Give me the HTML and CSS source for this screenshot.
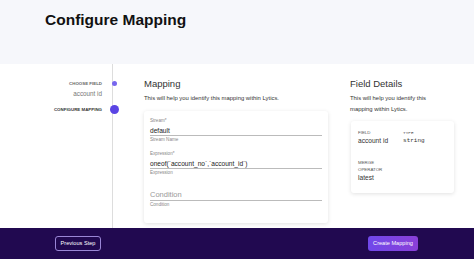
FILE: index.html
```html
<!DOCTYPE html>
<html lang="en">

<head>
    <meta charset="UTF-8">
    <meta name="viewport" content="width=device-width, initial-scale=1.0">
    <title>Configure Mapping</title>

    <link rel="stylesheet" href="styles.css">
</head>

<body>
    <div class="page-head">
        <h1>Configure Mapping</h1>
    </div>

    <div class="page-body">
        <div class="steps">
            <div class="step">
                <span class="step-title">Choose Field</span>
                <span class="step-value">account id</span>
                <span class="dot dot-small"></span>
            </div>
            <div class="step step-active">
                <span class="step-title">Configure Mapping</span>
                <span class="dot dot-big"></span>
            </div>
        </div>

        <div class="mapping">
            <h2>Mapping</h2>
            <p class="desc">This will help you identify this mapping within Lytics.</p>
            <div class="card form-card">
                <div class="field">
                    <label>Stream*</label>
                    <div class="input">default</div>
                    <small>Stream Name</small>
                </div>
                <div class="field">
                    <label>Expression*</label>
                    <div class="input">oneof(`account_no`,`account_id`)</div>
                    <small>Expression</small>
                </div>
                <div class="field field-empty">
                    <div class="input placeholder">Condition</div>
                    <small>Condition</small>
                </div>
            </div>
        </div>

        <div class="details">
            <h2>Field Details</h2>
            <p class="desc">This will help you identify this mapping within Lytics.</p>
            <div class="card detail-card">
                <div class="detail-row">
                    <div class="detail">
                        <span class="detail-key">Field</span>
                        <span class="detail-val">account id</span>
                    </div>
                    <div class="detail">
                        <span class="detail-key mono">Type</span>
                        <span class="detail-val mono">string</span>
                    </div>
                </div>
                <div class="detail">
                    <span class="detail-key">Merge<br>Operator</span>
                    <span class="detail-val">latest</span>
                </div>
            </div>
        </div>
    </div>

    <div class="page-foot">
        <button class="btn btn-outline">Previous Step</button>
        <button class="btn btn-primary">Create Mapping</button>
    </div>
</body>

</html>
```

FILE: styles.css
```css
* {
    box-sizing: border-box;
    margin: 0;
    padding: 0;
}

html,
body {
    height: 100%;
    margin: 0;
}

body {
    display: flex;
    flex-direction: column;
    background-color: #fff;
    color: #333;
    font-family: "Liberation Sans", Arial, sans-serif;
}

.page-head {
    height: 64px;
    background-color: #f6f7fb;
    padding: 10px 0 0 45px;
}

.page-head h1 {
    font-size: 15.5px;
    line-height: 20px;
    font-weight: bold;
    color: #111;
}

.page-body {
    flex: 1;
    display: flex;
}

/* left side steps */
.steps {
    width: 113px;
    border-right: 1px solid #ddd;
    padding: 17px 10px 0 0;
    text-align: right;
}

.step {
    position: relative;
    margin-bottom: 8px;
}

.step-title {
    display: block;
    font-size: 4.4px;
    line-height: 6px;
    font-weight: bold;
    text-transform: uppercase;
    color: #666;
}

.step-active .step-title {
    color: #333;
}

.step-value {
    display: block;
    font-size: 6.3px;
    line-height: 10px;
    margin-top: 2px;
    color: #777;
}

.dot {
    position: absolute;
    border-radius: 50%;
    background-color: #6650e6;
}

.dot-small {
    width: 5px;
    height: 5px;
    right: -15px;
    top: 0;
    background-color: #7766ee;
}

.dot-big {
    width: 9px;
    height: 9px;
    right: -17px;
    top: -2px;
    background-color: #5a44e4;
}

h2 {
    font-size: 9.5px;
    line-height: 12px;
    font-weight: normal;
    color: #333;
}

.desc {
    font-size: 5.9px;
    line-height: 11px;
    color: #333;
}

.card {
    background-color: #fff;
    border-radius: 3px;
    box-shadow: 0 1px 4px rgba(0, 0, 0, 0.12);
}

/* mapping column */
.mapping {
    width: 184px;
    margin-left: 31px;
    padding-top: 14px;
}

.mapping .desc {
    margin-top: 3px;
}

.form-card {
    margin-top: 7px;
    padding: 7px 6px 8px 6px;
    height: 112px;
}

.field {
    margin-bottom: 8px;
}

.field label {
    display: block;
    font-size: 4.6px;
    line-height: 6px;
    color: #888;
}

.field .input {
    font-size: 6.6px;
    line-height: 9px;
    margin-top: 2px;
    color: #222;
    border-bottom: 1px solid #bbb;
}

.field .placeholder {
    font-size: 7.5px;
    line-height: 11px;
    margin-top: 0;
    color: #999;
}

.field-empty {
    margin-top: 13px;
}

.field small {
    display: block;
    font-size: 4.6px;
    line-height: 7px;
    color: #888;
}

/* details column */
.details {
    width: 104px;
    margin-left: 22px;
    padding-top: 14px;
}

.details .desc {
    margin-top: 3px;
    padding-right: 15px;
}

.detail-card {
    margin-top: 6px;
    margin-left: 1px;
    height: 72px;
    padding: 8px 7px;
}

.detail-row {
    display: flex;
    gap: 15px;
    margin-bottom: 14px;
}

.detail-key {
    display: block;
    font-size: 4.4px;
    line-height: 7px;
    text-transform: uppercase;
    color: #555;
}

.detail-val {
    display: block;
    font-size: 6.6px;
    line-height: 9px;
    color: #333;
}

.mono {
    font-family: "Liberation Mono", "Courier New", monospace;
}

.detail-val.mono {
    font-size: 6px;
}

/* footer */
.page-foot {
    height: 31px;
    background-color: #210950;
    display: flex;
    justify-content: space-between;
    align-items: center;
    padding: 0 56px 1px 55px;
}

.btn {
    font-family: "Liberation Sans", Arial, sans-serif;
    font-size: 5.6px;
    color: #fff;
    border-radius: 3px;
    height: 15px;
    cursor: pointer;
}

.btn-outline {
    width: 46px;
    background: transparent;
    border: 1px solid #9a86d6;
}

.btn-primary {
    width: 50px;
    border: none;
    background: linear-gradient(90deg, #7048ea, #8a3fd8);
}
```
